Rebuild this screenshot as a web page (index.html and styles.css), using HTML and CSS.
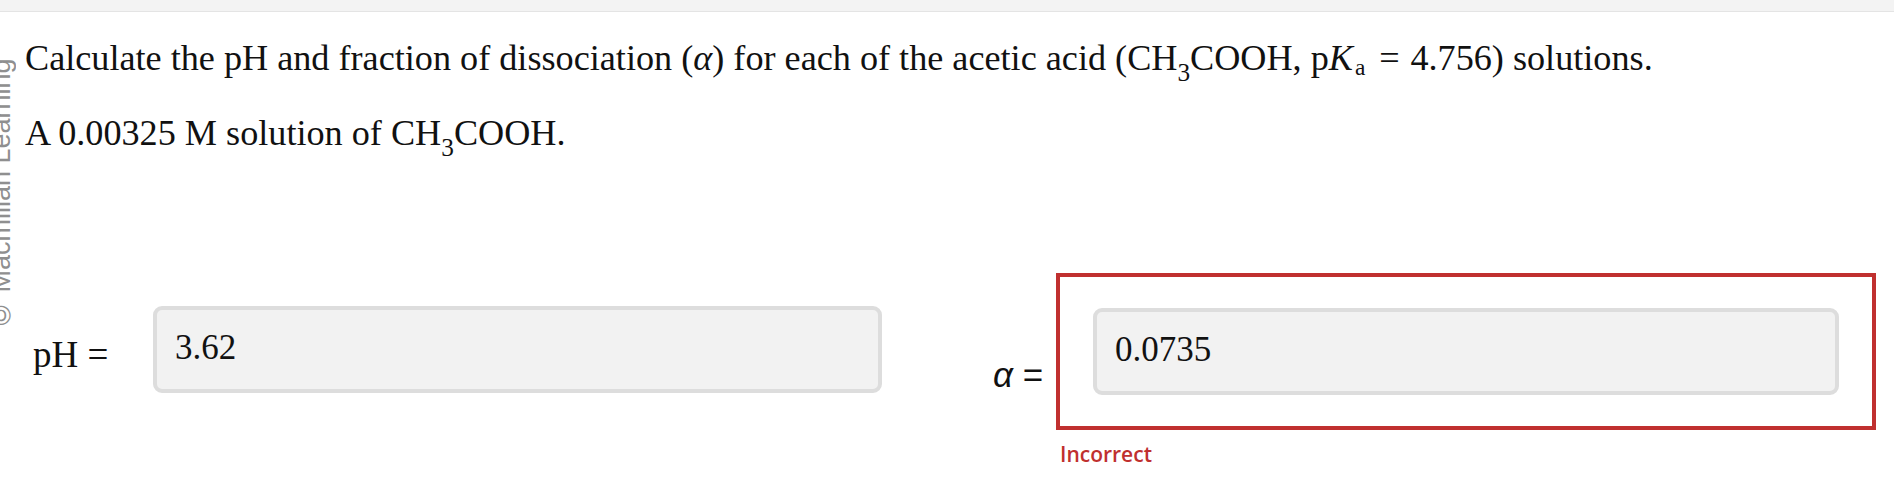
FILE: index.html
```html
<!DOCTYPE html>
<html lang="en">
<head>
<meta charset="utf-8">
<title>Acetic acid dissociation</title>
<link rel="stylesheet" href="styles.css">
</head>
<body>
<div class="topbar"></div>
<div class="watermark">© Macmillan Learning</div>
<main class="question">
  <p class="prompt">Calculate the pH and fraction of dissociation (<i class="mi">α</i>) for each of the acetic acid (CH<sub class="sub">3</sub>COOH, p<i class="mi">K</i><sub class="sub-a">a</sub><span class="eq">=</span>4.756) solutions.</p>
  <p class="prompt part">A 0.00325 M solution of CH<sub class="sub">3</sub>COOH.</p>
  <div class="answers">
    <div class="ph-group">
      <span class="ph-label">pH =</span>
      <div class="field">3.62</div>
    </div>
    <div class="alpha-group">
      <span class="alpha-label"><i>α</i> =</span>
      <div class="answer-col">
        <div class="incorrect-box">
          <div class="field field-wide">0.0735</div>
        </div>
        <div class="feedback">Incorrect</div>
      </div>
    </div>
  </div>
</main>
</body>
</html>
```

FILE: styles.css
```css
html, body {
  margin: 0;
  padding: 0;
  background: #ffffff;
}

body {
  font-family: "Liberation Serif", "Times New Roman", serif;
  font-size: 35px;
  color: #111111;
  position: relative;
  height: 480px;
  overflow: hidden;
}

.topbar {
  height: 11px;
  background: #f3f3f3;
  border-bottom: 1px solid #e4e4e4;
}

.watermark {
  position: absolute;
  left: -12px;
  top: 30px;
  height: 300px;
  writing-mode: vertical-rl;
  transform: rotate(180deg);
  font-family: "Liberation Sans", Arial, sans-serif;
  font-size: 27px;
  line-height: 27px;
  color: #8f8f8f;
  white-space: nowrap;
}

.question {
  padding-left: 25px;
}

.prompt {
  margin: 26px 0 0 0;
  font-size: 36.2px;
  line-height: 40px;
  white-space: nowrap;
}

.prompt.part {
  margin-top: 35px;
}

.mi {
  font-style: italic;
}

.sub {
  font-size: 0.7em;
  vertical-align: -0.42em;
  line-height: 0;
}

.sub-a {
  font-size: 0.65em;
  vertical-align: -0.22em;
  line-height: 0;
  margin-left: 2px;
}

.eq {
  margin: 0 0.3em 0 0.38em;
}

.answers {
  display: flex;
  align-items: flex-start;
  margin-top: 120px;
  padding-left: 8px;
}

.ph-group {
  display: flex;
  align-items: center;
  margin-top: 33px;
}

.ph-label {
  width: 120px;
  flex-shrink: 0;
  font-size: 37px;
  line-height: 40px;
  margin-top: 11px;
}

.field {
  box-sizing: border-box;
  width: 729px;
  height: 87px;
  border: 4px solid #dddddd;
  border-radius: 9px;
  background: #f2f2f2;
  padding: 0 18px 3px 18px;
  display: flex;
  align-items: center;
  line-height: 40px;
}

.field-wide {
  width: 100%;
}

.alpha-group {
  display: flex;
  align-items: flex-start;
  margin-left: 111px;
}

.alpha-label {
  width: 63px;
  flex-shrink: 0;
  margin-top: 82px;
  line-height: 40px;
  font-family: "Liberation Sans", Arial, sans-serif;
}

.answer-col {
  display: flex;
  flex-direction: column;
}

.incorrect-box {
  box-sizing: border-box;
  width: 820px;
  border: 4px solid #c0302f;
  padding: 31px 33px;
}

.feedback {
  margin-top: 12px;
  padding-left: 4px;
  font-family: "Open Sans", "Liberation Sans", sans-serif;
  font-size: 21px;
  font-weight: 600;
  line-height: 24px;
  color: #c0302f;
}
```
